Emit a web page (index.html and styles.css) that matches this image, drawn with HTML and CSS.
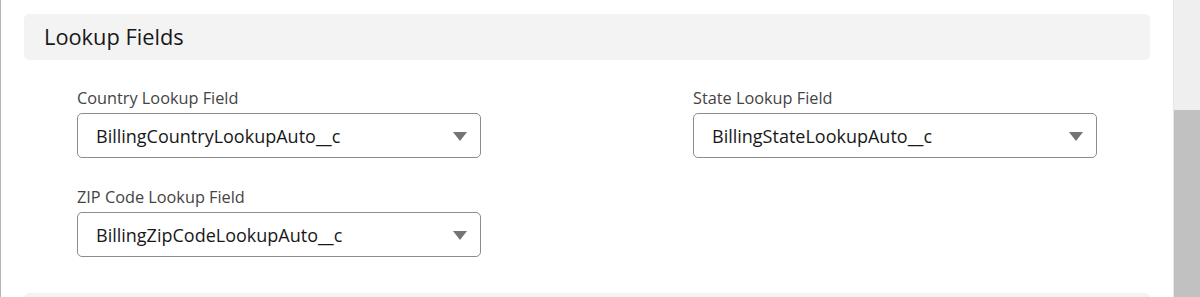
FILE: index.html
```html
<!DOCTYPE html>
<html>
<head>
<meta charset="utf-8">
<link rel="stylesheet" href="styles.css">
</head>
<body>
<div class="page">
  <div class="main">
    <div class="section-head"><h2 class="section-title">Lookup Fields</h2></div>
    <div class="fields">
      <div class="field">
        <label class="field-label">Country Lookup Field</label>
        <div class="select"><span class="select-value">BillingCountryLookupAuto__c</span><span class="caret"></span></div>
      </div>
      <div class="field">
        <label class="field-label">State Lookup Field</label>
        <div class="select"><span class="select-value">BillingStateLookupAuto__c</span><span class="caret"></span></div>
      </div>
      <div class="field">
        <label class="field-label">ZIP Code Lookup Field</label>
        <div class="select"><span class="select-value">BillingZipCodeLookupAuto__c</span><span class="caret"></span></div>
      </div>
    </div>
    <div class="next-section"></div>
  </div>
  <div class="scrollbar"><div class="scroll-track"></div><div class="scroll-thumb"></div></div>
</div>
</body>
</html>
```

FILE: styles.css
```css
html, body {
  margin: 0;
  padding: 0;
  background: #ffffff;
  height: 297px;
  overflow: hidden;
}
body {
  font-family: "Open Sans", "Noto Sans", sans-serif;
  color: #181818;
}
.page {
  display: flex;
  height: 297px;
  border-left: 1px solid #b4b4b4;
  box-sizing: border-box;
  overflow: hidden;
}
.main {
  flex: 1;
  padding: 14px 23px 0 23px;
  display: flex;
  flex-direction: column;
}
.main > * {
  flex-shrink: 0;
}
.section-head {
  height: 46px;
  background: #f3f3f3;
  border-radius: 5px;
  display: flex;
  align-items: center;
  padding-left: 20px;
}
.section-title {
  margin: 0;
  font-size: 21.8px;
  font-weight: 400;
  color: #181818;
  line-height: 1;
}
.fields {
  display: grid;
  grid-template-columns: 404px 404px;
  justify-content: space-between;
  row-gap: 28px;
  padding: 27px 53px 0 53px;
}
.field {
  display: flex;
  flex-direction: column;
}
.field-label {
  font-size: 16.3px;
  line-height: 22px;
  color: #444444;
  margin-bottom: 4px;
}
.select {
  height: 45px;
  box-sizing: border-box;
  border: 1px solid #8c8c8c;
  border-radius: 5px;
  display: flex;
  align-items: center;
  justify-content: space-between;
  padding: 0 13px 0 18px;
}
.select-value {
  font-size: 18px;
  color: #181818;
}
.caret {
  width: 0;
  height: 0;
  border-left: 7.5px solid transparent;
  border-right: 7.5px solid transparent;
  border-top: 9px solid #747474;
  margin-top: 2px;
}
.next-section {
  margin-top: 36px;
  height: 20px;
  background: #f3f3f3;
  border-radius: 5px 5px 0 0;
}
.scrollbar {
  width: 26px;
  display: flex;
  flex-direction: column;
  border-left: 1px solid #e6e6e6;
}
.scroll-track {
  height: 110px;
  background: #efefef;
}
.scroll-thumb {
  flex: 1;
  background: #c1c1c1;
}
```
